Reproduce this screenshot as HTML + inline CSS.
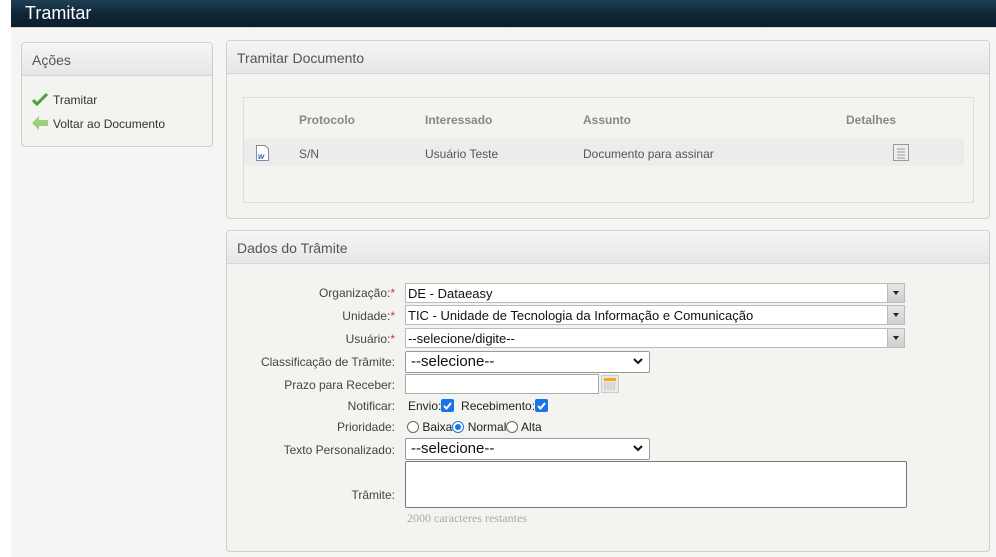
<!DOCTYPE html>
<html><head><meta charset="utf-8"><style>
*{box-sizing:border-box;margin:0;padding:0}
body{width:996px;height:557px;overflow:hidden;background:#fff;font-family:"Liberation Sans",Arial,sans-serif;font-size:12px;color:#333;position:relative}
.bg{position:absolute;left:11px;top:0;right:0;bottom:0;background:#f5f5f3}
.hdr{position:absolute;left:11px;top:0;width:985px;height:28px;background:linear-gradient(#1f3f55,#0f2638 50%,#0b1f2e);border-bottom:1px solid #d0d0d0}
.hdr span{position:absolute;left:14px;top:3px;color:#fff;font-size:18px}
.panel{position:absolute;border:1px solid #cfcfcf;border-radius:4px;background:#f3f3f0;overflow:hidden}
.ph{height:33px;border-bottom:1px solid #d6d6d6;background:linear-gradient(#f6f6f6,#e6e6e6);font-size:14px;color:#555;padding:9px 0 0 10px}
.abs{position:absolute;white-space:nowrap}
.lbl{position:absolute;right:601px;color:#444;text-align:right;white-space:nowrap}
.star{color:#e03030}
.sel{position:absolute;left:405px;height:20px;background:#fff;border:1px solid #bbb;font-size:13px;color:#111;padding:2px 0 0 2px;white-space:nowrap}
.sel .ar{position:absolute;right:0;top:0;width:17px;height:18px;background:linear-gradient(#e6e6e6,#cfcfcf);border-left:1px solid #bbb}
.sel .ar:after{content:"";position:absolute;left:5px;top:7px;border-left:3px solid transparent;border-right:3px solid transparent;border-top:4px solid #222}
.nsel{position:absolute;left:405px;width:245px;height:22px;background:#fff;border:1px solid #999;border-radius:2px;font-size:15px;color:#111;padding:1px 0 0 5px}
.chev{position:absolute;right:6px;top:3px}
.cb{display:inline-block;width:13px;height:13px;background:#1a73e8;border-radius:2px;vertical-align:-2px;position:relative}
.rad{display:inline-block;width:12px;height:12px;border:1px solid #666;border-radius:50%;vertical-align:-2px;background:#fff;position:relative}
</style></head><body>
<div class="bg"></div>
<div class="hdr"><span>Tramitar</span></div>

<div class="panel" style="left:21px;top:42px;width:192px;height:105px">
<div class="ph">Ações</div>
<svg class="abs" style="left:10px;top:50px" width="16" height="13" viewBox="0 0 16 13"><path d="M1 7 L5 11 L15 1" fill="none" stroke="#4aa03a" stroke-width="3"/></svg>
<div class="abs" style="left:31px;top:50px">Tramitar</div>
<svg class="abs" style="left:10px;top:73px" width="16" height="14" viewBox="0 0 16 14"><path d="M0 7 L7 0 L7 4 L16 4 L16 10 L7 10 L7 14Z" fill="#9ccf7c"/></svg>
<div class="abs" style="left:31px;top:74px">Voltar ao Documento</div>
</div>

<div class="panel" style="left:226px;top:40px;width:764px;height:179px">
<div class="ph">Tramitar Documento</div>
<div class="abs" style="left:16px;top:56px;width:731px;height:106px;border:1px solid #ddd;background:#f3f3f0"></div>
<div class="abs" style="left:17px;top:97px;width:720px;height:28px;background:#ececec"></div>
<div class="abs" style="left:72px;top:72px;color:#888;font-weight:bold">Protocolo</div>
<div class="abs" style="left:198px;top:72px;color:#888;font-weight:bold">Interessado</div>
<div class="abs" style="left:356px;top:72px;color:#888;font-weight:bold">Assunto</div>
<div class="abs" style="left:619px;top:72px;color:#888;font-weight:bold">Detalhes</div>
<svg class="abs" style="left:29px;top:104px" width="13" height="16" viewBox="0 0 13 16"><path d="M0.5 0.5H9L12.5 4V15.5H0.5Z" fill="#fff" stroke="#889"/><text x="2" y="14" font-size="8" fill="#2a5ec8" font-family="Liberation Sans" font-weight="bold" font-style="italic">w</text></svg>
<div class="abs" style="left:72px;top:106px;color:#555">S/N</div>
<div class="abs" style="left:198px;top:106px;color:#555">Usuário Teste</div>
<div class="abs" style="left:356px;top:106px;color:#555">Documento para assinar</div>
<svg class="abs" style="left:666px;top:103px" width="16" height="17" viewBox="0 0 16 17"><rect x="0.5" y="0.5" width="15" height="16" fill="#eee" stroke="#999"/><path d="M4 5h8M4 8h8M4 11h8M4 14h8" stroke="#999"/></svg>
</div>

<div class="panel" style="left:226px;top:230px;width:764px;height:322px">
<div class="ph">Dados do Trâmite</div>
</div>

<div class="lbl" style="top:286px">Organização:<span class="star">*</span></div>
<div class="sel" style="top:283px;width:500px">DE - Dataeasy<div class="ar"></div></div>
<div class="lbl" style="top:309px">Unidade:<span class="star">*</span></div>
<div class="sel" style="top:305px;width:500px">TIC - Unidade de Tecnologia da Informação e Comunicação<div class="ar"></div></div>
<div class="lbl" style="top:332px">Usuário:<span class="star">*</span></div>
<div class="sel" style="top:328px;width:500px">--selecione/digite--<div class="ar"></div></div>
<div class="lbl" style="top:355px">Classificação de Trâmite:</div>
<div class="nsel" style="top:351px">--selecione--<svg class="chev" width="10" height="12" viewBox="0 0 10 12"><path d="M1 4 L5 8 L9 4" fill="none" stroke="#111" stroke-width="2"/></svg></div>
<div class="lbl" style="top:378px">Prazo para Receber:</div>
<div class="abs" style="left:405px;top:374px;width:194px;height:20px;background:#fff;border:1px solid #aaa"></div>
<svg class="abs" style="left:601px;top:375px" width="18" height="18" viewBox="0 0 18 18"><rect x="0.5" y="0.5" width="17" height="17" fill="#e8e8e8" stroke="#ccc"/><rect x="3" y="3" width="12" height="3" fill="#f5a623"/><path d="M4 7v8M7 7v8M10 7v8M13 7v8" stroke="#bbb"/></svg>
<div class="lbl" style="top:399px">Notificar:</div>
<div class="abs" style="left:408px;top:399px;color:#222">Envio:<span class="cb"><svg style="position:absolute;left:1px;top:1px" width="11" height="11"><path d="M2 6 L4.5 8.5 L9 3" fill="none" stroke="#fff" stroke-width="2"/></svg></span>&nbsp; Recebimento:<span class="cb"><svg style="position:absolute;left:1px;top:1px" width="11" height="11"><path d="M2 6 L4.5 8.5 L9 3" fill="none" stroke="#fff" stroke-width="2"/></svg></span></div>
<div class="lbl" style="top:420px">Prioridade:</div>
<div class="abs" style="left:407px;top:420px;color:#222"><span class="rad"></span> Baixa<span class="rad" style="border-color:#1a73e8"><span style="position:absolute;left:2px;top:2px;width:6px;height:6px;border-radius:50%;background:#1a73e8"></span></span> Normal<span class="rad"></span> Alta</div>
<div class="lbl" style="top:443px">Texto Personalizado:</div>
<div class="nsel" style="top:438px">--selecione--<svg class="chev" width="10" height="12" viewBox="0 0 10 12"><path d="M1 4 L5 8 L9 4" fill="none" stroke="#111" stroke-width="2"/></svg></div>
<div class="lbl" style="top:488px">Trâmite:</div>
<div class="abs" style="left:405px;top:461px;width:502px;height:47px;background:#fff;border:1px solid #777;border-radius:2px"></div>
<div class="abs" style="left:407px;top:511px;color:#aaa;font-family:'Liberation Serif',serif;font-size:12px">2000 caracteres restantes</div>
</body></html>
